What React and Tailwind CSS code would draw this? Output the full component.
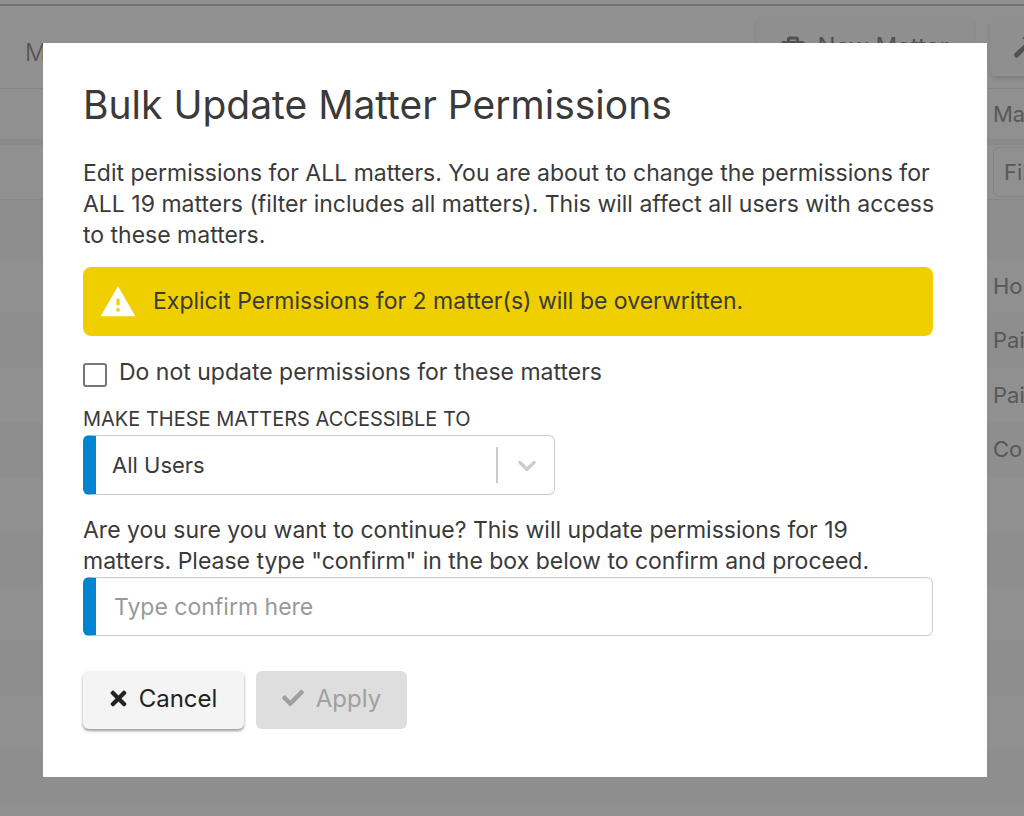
import { useState } from 'react';
import { FaBriefcase, FaCheck, FaTimes, FaHammer } from 'react-icons/fa';
import { MdWarning } from 'react-icons/md';

const rows = [
  { id: 1, link: '', status: '' },
  { id: 2, link: '', status: 'Ho' },
  { id: 3, link: '', status: 'Pai' },
  { id: 4, link: 'r', status: 'Pai' },
  { id: 5, link: '', status: 'Co' },
  { id: 6, link: '', status: '' },
  { id: 7, link: '', status: '' },
  { id: 8, link: '', status: '' },
  { id: 9, link: '', status: '' },
  { id: 10, link: '', status: '' },
  { id: 11, link: '', status: '' },
  { id: 12, link: '', status: '' },
];

function MattersPage() {
  return (
    <div className="h-full overflow-hidden border-t-4 border-[#f8f8f8] bg-[#f8f8f8]">
      <div className="flex h-[85px] items-center border-t-2 border-b border-t-[#c4c4c4] border-b-[#e4e4e4] pl-[25px]">
        <h1 className="mt-3 text-[24px] font-light text-[#8c8c8c]">Matters</h1>
        <button className="mr-4 ml-auto flex h-[58px] w-[218px] shrink-0 items-center justify-center gap-3 rounded-md bg-[#f6f6f6] text-[24px] text-[#8c8c8c] shadow">
          <FaBriefcase className="size-6" />
          New Matter
        </button>
        <button aria-label="Tools" className="-mr-10 flex h-[58px] w-[74px] shrink-0 items-center rounded-md bg-[#f6f6f6] pl-6 text-[#8c8c8c] shadow-md">
          <FaHammer className="size-6" />
        </button>
      </div>
      <table className="w-full table-fixed text-left text-[22px] text-[#989898]">
        <thead>
          <tr className="h-[53px] border-b-[6px] border-[#eeeeee]">
            <th />
            <th className="w-[31px] font-normal whitespace-nowrap">Ma</th>
          </tr>
          <tr className="h-[54px] border-b border-[#e8e8e8]">
            <td />
            <td className="py-0.5">
              <div className="w-[60px] rounded-md border border-[#e4e4e4] px-2.5 py-2 leading-8 whitespace-nowrap">Fil</div>
            </td>
          </tr>
        </thead>
        <tbody>
          {rows.map((row) => (
            <tr key={row.id} className="h-[53px] odd:h-[56px] odd:bg-[#f4f4f4] first:h-[60px]!">
              <td className="overflow-hidden">
                <a href="#matter" className="-ml-2 text-[#4a7ab0]">{row.link}</a>
              </td>
              <td className="whitespace-nowrap">{row.status}</td>
            </tr>
          ))}
        </tbody>
      </table>
    </div>
  );
}

export default function App() {
  const [skip, setSkip] = useState(false);
  const [confirmText, setConfirmText] = useState('');
  const canApply = confirmText === 'confirm';

  return (
    <div className="relative h-screen overflow-hidden font-['Inter',sans-serif]">
      <MattersPage />

      {/* Overlay */}
      <div className="absolute inset-0 bg-black/42 pt-[43px] pr-[37px] pl-[43px]">
        <div role="dialog" aria-labelledby="title" className="bg-white pt-9 pr-10 pb-12 pl-10 text-[23px] leading-[31px] text-[#3a3a3a]">
          <h2 id="title" className="text-[39px] leading-[52px]">Bulk Update Matter Permissions</h2>

          <p className="mt-[27px] mr-2">
            Edit permissions for ALL matters. You are about to change the permissions for
            ALL 19 matters (filter includes all matters). This will affect all users with access
            to these matters.
          </p>

          <div className="mt-4 mr-[14px] flex h-[69px] items-center gap-4 rounded-lg bg-[#f0cf00] pl-4">
            <MdWarning className="size-[38px] text-white" />
            Explicit Permissions for 2 matter(s) will be overwritten.
          </div>

          <label className="mt-[21px] flex items-center gap-3">
            <input
              type="checkbox"
              checked={skip}
              onChange={(e) => setSkip(e.target.checked)}
              className="mt-1 size-6 appearance-none rounded-[3px] border-[2px] border-[#767676] bg-white checked:bg-[#0284d0]"
            />
            Do not update permissions for these matters
          </label>

          <label htmlFor="access" className="mt-4 block text-[20px]">
            <span className="leading-[31px]">MAKE THESE MATTERS ACCESSIBLE TO</span>
          </label>
          <div className="relative w-[472px]">
            <select
              id="access"
              className="block h-[60px] w-full appearance-none rounded-md border border-l-[13px] border-[#cccccc] border-l-[#0284d0] bg-white pl-4 text-[22px]"
            >
              <option>All Users</option>
            </select>
            <div className="pointer-events-none absolute inset-y-3 right-0 flex w-[59px] items-center justify-center border-l-2 border-[#cccccc] text-[#cccccc]">
              <svg viewBox="0 0 20 20" className="size-[30px]" fill="currentColor">
                <path d="M4.516 7.548c0.436-0.446 1.043-0.481 1.576 0l3.908 3.747 3.908-3.747c0.533-0.481 1.141-0.446 1.574 0 0.436 0.445 0.408 1.197 0 1.615-0.406 0.418-4.695 4.502-4.695 4.502-0.217 0.223-0.502 0.335-0.787 0.335s-0.57-0.112-0.789-0.335c0 0-4.287-4.084-4.695-4.502s-0.436-1.17 0-1.615z" />
              </svg>
            </div>
          </div>

          <label htmlFor="confirm" className="mt-5 mr-[14px] block">
            Are you sure you want to continue? This will update permissions for 19
            matters. Please type "confirm" in the box below to confirm and proceed.
          </label>
          <div className="mr-[14px]">
            <input
              id="confirm"
              type="text"
              placeholder="Type confirm here"
              value={confirmText}
              onChange={(e) => setConfirmText(e.target.value)}
              className="block h-[59px] w-full rounded-md border border-l-[13px] border-[#cccccc] border-l-[#0284d0] pl-[18px] inset-shadow-xs placeholder:text-[#999999]"
            />
          </div>

          <div className="mt-[35px] flex gap-3 text-[24px]">
            <button className="flex h-[58px] w-[161px] items-center justify-center gap-3 rounded-md bg-[#f4f4f4] pb-1 text-[#222222] shadow-[0_2px_3px_rgba(0,0,0,0.4)]">
              <FaTimes className="h-[23px] w-[17px]" />
              Cancel
            </button>
            <button disabled={!canApply} className="flex h-[58px] w-[151px] items-center justify-center gap-3 rounded-md bg-[#dedede] pb-1 text-[#a0a0a0]">
              <FaCheck className="size-[22px]" />
              Apply
            </button>
          </div>
        </div>
      </div>
    </div>
  );
}
